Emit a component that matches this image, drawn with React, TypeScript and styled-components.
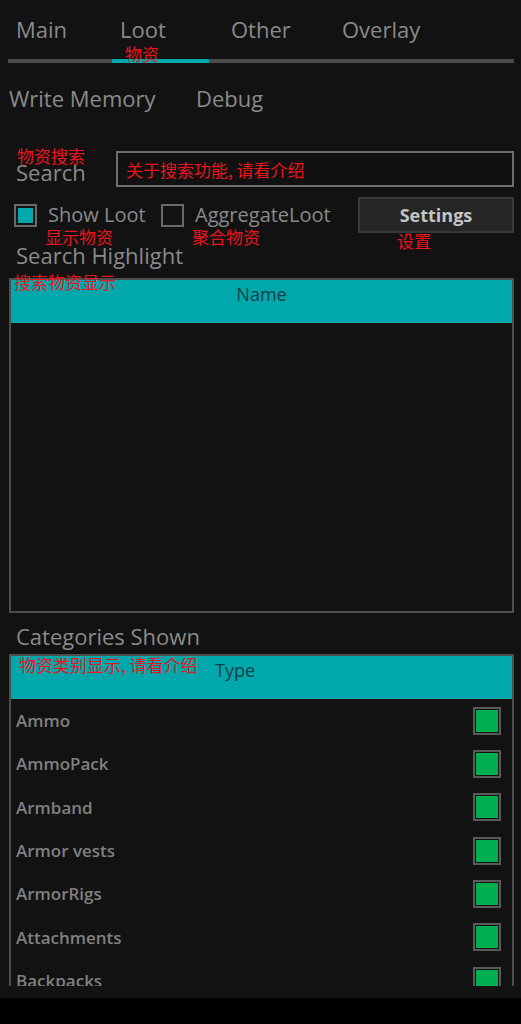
import React from "react";
import styled, { createGlobalStyle } from "styled-components";

const GlobalStyle = createGlobalStyle`
  html, body { margin: 0; padding: 0; background: #000; }
  * { box-sizing: border-box; }
`;

const UI = `"Open Sans", "Noto Sans", "Noto Sans CJK SC", sans-serif`;
const CJK = `"Noto Sans CJK SC", "Noto Sans", sans-serif`;

const Page = styled.div`
  width: 521px;
  height: 1024px;
  background: #000;
  display: flex;
  flex-direction: column;
`;

const Panel = styled.div`
  height: 998px;
  background: #121212;
  display: flex;
  flex-direction: column;
  position: relative;
  overflow: hidden;
  font-family: ${UI};
  color: #8a8a8a;
`;

const Section = styled.div`
  position: relative;
`;

const Note = styled.span<{ $x: number; $y: number }>`
  position: absolute;
  left: ${(p) => p.$x}px;
  top: ${(p) => p.$y}px;
  font-family: ${CJK};
  font-size: 17px;
  line-height: 17px;
  color: #e8141e;
  white-space: nowrap;
  pointer-events: none;
  z-index: 2;
`;

const TabBar = styled.div`
  display: flex;
  padding: 14px 0 0 8px;
  height: 59px;
`;

const Tab = styled.div<{ $w?: number }>`
  width: ${(p) => (p.$w ? `${p.$w}px` : "auto")};
  padding-left: 8px;
  font-size: 22px;
  line-height: 30px;
  color: #8a8a8a;
`;

const Strip = styled.div`
  margin-left: 8px;
  width: 506px;
  height: 4px;
  background: #4b4b4b;
  display: flex;
`;

const Indicator = styled.div`
  margin-left: 104px;
  width: 97px;
  height: 100%;
  background: #00a8ab;
`;

const SubTabs = styled.div`
  display: flex;
  padding-top: 20px;
`;

const SubTab = styled.div<{ $w?: number }>`
  width: ${(p) => (p.$w ? `${p.$w}px` : "auto")};
  padding-left: 9px;
  font-size: 22px;
  line-height: 30px;
`;

const SearchRow = styled.div`
  display: flex;
  align-items: flex-start;
  margin-top: 38px;
  padding-left: 16px;
`;

const FieldLabel = styled.div`
  width: 100px;
  padding-top: 6px;
  font-size: 22px;
  line-height: 30px;
`;

const InputBox = styled.div`
  width: 398px;
  height: 36px;
  border: 2px solid #6e6e6e;
  background: #111;
  display: flex;
  align-items: center;
  padding-left: 8px;
  font-family: ${CJK};
  font-size: 17px;
  color: #e8141e;
`;

const OptionsRow = styled.div`
  display: flex;
  align-items: center;
  height: 36px;
  margin-top: 10px;
  padding-left: 14px;
`;

const Option = styled.label<{ $w: number }>`
  width: ${(p) => p.$w}px;
  display: flex;
  align-items: center;
  gap: 11px;
  font-size: 20px;
  line-height: 28px;
`;

const Box = styled.span<{ $on?: boolean }>`
  width: 23px;
  height: 23px;
  border: 2px solid #6a6a6a;
  padding: 2px;
  display: inline-flex;
  &::after {
    content: "";
    flex: 1;
    background: ${(p) => (p.$on ? "#00a8ab" : "transparent")};
  }
`;

const Button = styled.button`
  width: 156px;
  height: 36px;
  background: #252525;
  border: 2px solid #383838;
  color: #c4c4c4;
  font-family: ${UI};
  font-weight: 700;
  font-size: 18px;
  padding: 0;
`;

const Heading = styled.div<{ $mt: number }>`
  margin-top: ${(p) => p.$mt}px;
  padding-left: 16px;
  font-size: 22px;
  line-height: 30px;
`;

const Table = styled.div<{ $h: number; $mt: number; $open?: boolean }>`
  margin: ${(p) => p.$mt}px 0 0 9px;
  width: 505px;
  height: ${(p) => p.$h}px;
  border: 2px solid #4e4e4e;
  border-bottom-width: ${(p) => (p.$open ? 0 : 2)}px;
  overflow: hidden;
  display: flex;
  flex-direction: column;
`;

const HeaderRow = styled.div<{ $cols: string }>`
  height: 43px;
  flex: none;
  background: #00a8ab;
  display: grid;
  grid-template-columns: ${(p) => p.$cols};
`;

const HeaderCell = styled.div`
  text-align: center;
  padding-top: 2px;
  font-size: 18px;
  line-height: 24px;
  color: #163e48;
`;

const Row = styled.div`
  height: 43.33px;
  flex: none;
  display: flex;
  align-items: center;
  justify-content: space-between;
  padding: 0 11px 0 5px;
`;

const RowLabel = styled.span`
  font-size: 17px;
  font-weight: 600;
  color: #808080;
`;

const GreenBox = styled.span`
  width: 28px;
  height: 28px;
  border: 2px solid #5a5a5a;
  padding: 1px;
  background: #111;
  display: inline-flex;
  &::after {
    content: "";
    flex: 1;
    background: #00b050;
  }
`;

const categories = [
  "Ammo",
  "AmmoPack",
  "Armband",
  "Armor vests",
  "ArmorRigs",
  "Attachments",
  "Backpacks",
];

export default function App() {
  return (
    <>
      <GlobalStyle />
      <Page>
        <Panel>
          <Section>
            <TabBar>
              <Tab $w={104}>Main</Tab>
              <Tab $w={111}>Loot</Tab>
              <Tab $w={111}>Other</Tab>
              <Tab>Overlay</Tab>
            </TabBar>
            <Strip>
              <Indicator />
            </Strip>
            <Note $x={125} $y={45}>物资</Note>
          </Section>

          <SubTabs>
            <SubTab $w={187}>Write Memory</SubTab>
            <SubTab>Debug</SubTab>
          </SubTabs>

          <Section>
            <SearchRow>
              <FieldLabel>Search</FieldLabel>
              <InputBox>关于搜索功能, 请看介绍</InputBox>
            </SearchRow>
            <Note $x={17} $y={34}>物资搜索</Note>
          </Section>

          <Section>
            <OptionsRow>
              <Option $w={147}>
                <Box $on />
                Show Loot
              </Option>
              <Option $w={197}>
                <Box />
                AggregateLoot
              </Option>
              <Button>Settings</Button>
            </OptionsRow>
            <Note $x={45} $y={41}>显示物资</Note>
            <Note $x={192} $y={41}>聚合物资</Note>
            <Note $x={397} $y={45}>设置</Note>
          </Section>

          <Section>
            <Heading $mt={7}>Search Highlight</Heading>
            <Table $h={335} $mt={8}>
              <HeaderRow $cols="1fr">
                <HeaderCell>Name</HeaderCell>
              </HeaderRow>
            </Table>
            <Note $x={14} $y={40}>搜索物资显示</Note>
          </Section>

          <Section>
            <Heading $mt={8}>Categories Shown</Heading>
            <Table $h={332} $mt={3} $open>
              <HeaderRow $cols="448px 1fr">
                <HeaderCell>Type</HeaderCell>
                <span />
              </HeaderRow>
              {categories.map((c) => (
                <Row key={c}>
                  <RowLabel>{c}</RowLabel>
                  <GreenBox />
                </Row>
              ))}
            </Table>
            <Note $x={19} $y={43}>物资类别显示, 请看介绍</Note>
          </Section>
        </Panel>
      </Page>
    </>
  );
}
